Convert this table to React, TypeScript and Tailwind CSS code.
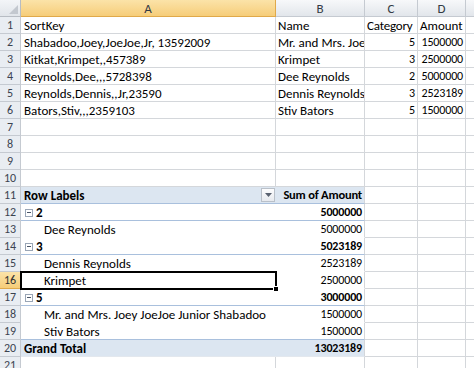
import React from 'react';

type Row = {
  n: number;
  a?: React.ReactNode;
  b?: React.ReactNode;
  c?: React.ReactNode;
  d?: React.ReactNode;
  pivot?: 'head' | 'group' | 'item' | 'total';
};

const font = { fontFamily: 'Carlito, Calibri, Lato, "Liberation Sans", sans-serif' };

function Collapse() {
  return (
    <span className="inline-flex items-center justify-center w-[8px] h-[8px] border border-[#9aa6b6] bg-white ml-[1px] mr-[3px] mt-[1px]">
      <span className="block w-[4px] h-px bg-[#4a5566]" />
    </span>
  );
}

function Dropdown() {
  return (
    <span className="absolute right-[1px] top-[1px] w-[14px] h-[14px] border border-[#b9c0c9] bg-gradient-to-b from-[#fdfdfe] to-[#e6e9ee] flex items-center justify-center">
      <svg width="7" height="4" viewBox="0 0 7 4">
        <path d="M0 0 L7 0 L3.5 4 Z" fill="#5a6270" />
      </svg>
    </span>
  );
}

// digits are narrower in the original font, so numbers get a slightly smaller size
function Num({ v }: { v: React.ReactNode }) {
  if (typeof v !== 'number') return <>{v}</>;
  return <span className="text-[12px] tracking-[-0.15px]">{v}</span>;
}

const rows: Row[] = [
  { n: 1, a: 'SortKey', b: 'Name', c: 'Category', d: 'Amount' },
  { n: 2, a: 'Shabadoo,Joey,JoeJoe,Jr, 13592009', b: 'Mr. and Mrs. Joey JoeJoe Junior Shabadoo', c: 5, d: 1500000 },
  { n: 3, a: 'Kitkat,Krimpet,,457389', b: 'Krimpet', c: 3, d: 2500000 },
  { n: 4, a: 'Reynolds,Dee,,,5728398', b: 'Dee Reynolds', c: 2, d: 5000000 },
  { n: 5, a: 'Reynolds,Dennis,,Jr,23590', b: 'Dennis Reynolds', c: 3, d: 2523189 },
  { n: 6, a: 'Bators,Stiv,,,2359103', b: 'Stiv Bators', c: 5, d: 1500000 },
  { n: 7 },
  { n: 8 },
  { n: 9 },
  { n: 10 },
  { n: 11, a: 'Row Labels', b: 'Sum of Amount', pivot: 'head' },
  { n: 12, a: '2', b: 5000000, pivot: 'group' },
  { n: 13, a: 'Dee Reynolds', b: 5000000, pivot: 'item' },
  { n: 14, a: '3', b: 5023189, pivot: 'group' },
  { n: 15, a: 'Dennis Reynolds', b: 2523189, pivot: 'item' },
  { n: 16, a: 'Krimpet', b: 2500000, pivot: 'item' },
  { n: 17, a: '5', b: 3000000, pivot: 'group' },
  { n: 18, a: 'Mr. and Mrs. Joey JoeJoe Junior Shabadoo', b: 1500000, pivot: 'item' },
  { n: 19, a: 'Stiv Bators', b: 1500000, pivot: 'item' },
  { n: 20, a: 'Grand Total', b: 13023189, pivot: 'total' },
  { n: 21 },
];

const isNum = (v: React.ReactNode) => typeof v === 'number';

export default function App() {
  const selectedRow = 16;

  return (
    <div className="w-[474px] h-[368px] overflow-hidden bg-white text-[13px] leading-none text-black" style={font}>
      {/* column headers */}
      <div className="flex h-[17px] text-[#333a44]">
        <div className="w-[21px] shrink-0 border-r border-b border-[#b7bcc3] bg-gradient-to-b from-[#f3f5f8] to-[#e1e5ea] relative">
          <svg className="absolute right-[2px] bottom-[2px]" width="9" height="9" viewBox="0 0 9 9">
            <path d="M9 0 L9 9 L0 9 Z" fill="#c3c8cf" />
          </svg>
        </div>
        <div className="w-[255px] shrink-0 border-r border-b border-[#e0a94a] bg-gradient-to-b from-[#fbe3a8] to-[#f6cd79] flex items-center justify-center">A</div>
        <div className="w-[89px] shrink-0 border-r border-b border-[#c5cad1] bg-gradient-to-b from-[#f7f8fa] to-[#e2e6eb] flex items-center justify-center">B</div>
        <div className="w-[53px] shrink-0 border-r border-b border-[#c5cad1] bg-gradient-to-b from-[#f7f8fa] to-[#e2e6eb] flex items-center justify-center">C</div>
        <div className="w-[48px] shrink-0 border-r border-b border-[#c5cad1] bg-gradient-to-b from-[#f7f8fa] to-[#e2e6eb] flex items-center justify-center">D</div>
        <div className="flex-1 border-b border-[#c5cad1] bg-gradient-to-b from-[#f7f8fa] to-[#e2e6eb]" />
      </div>

      {rows.map((r) => {
        const sel = r.n === selectedRow;
        const p = r.pivot;
        const band = p === 'head' || p === 'total';
        const bold = p === 'head' || p === 'group' || p === 'total';
        const pivotBorder =
          p === 'head' || p === 'group' ? 'border-b border-[#a9c0dd]' : p === 'total' ? 'border-b border-[#e3e8ee]' : 'border-b border-white';
        return (
          <div key={r.n} className="flex h-[17px]">
            <div
              className={
                'w-[21px] shrink-0 border-r border-b flex items-center justify-center text-[12px] ' +
                (sel
                  ? 'bg-gradient-to-b from-[#fbe3a8] to-[#f6cd79] border-[#e0a94a] text-[#333]'
                  : 'bg-[#e9edf2] border-[#c5cad1] text-[#3b4350]')
              }
            >
              {r.n}
            </div>
            {p ? (
              <>
                <div
                  className={
                    'w-[255px] shrink-0 relative flex items-center pl-[3px] whitespace-nowrap overflow-visible ' +
                    pivotBorder +
                    (band ? ' bg-[#dce6f1]' : '') +
                    (p === 'total' ? ' border-t border-t-[#a9c0dd] -mt-px h-[18px]' : '') +
                    (bold ? ' font-bold' : '')
                  }
                >
                  {p === 'group' && <Collapse />}
                  {p === 'item' ? <span className="pl-[20px]">{r.a}</span> : r.a}
                  {p === 'head' && <Dropdown />}
                  {sel && (
                    <div className="absolute -left-[1px] -top-[1px] w-[257px] h-[19px] border-2 border-black pointer-events-none">
                      <span className="absolute -right-[4px] -bottom-[4px] w-[6px] h-[6px] bg-black border border-white" />
                    </div>
                  )}
                </div>
                <div
                  className={
                    'w-[89px] shrink-0 flex items-center justify-end pr-[2px] whitespace-nowrap ' +
                    pivotBorder +
                    ' border-r border-r-[#d4d7db]' +
                    (band ? ' bg-[#dce6f1]' : '') +
                    (p === 'total' ? ' border-t border-t-[#a9c0dd] -mt-px h-[18px]' : '') +
                    (bold ? ' font-bold' : '')
                  }
                >
                  {p === 'head' ? <span className="text-[12.5px] tracking-[-0.2px]">{r.b}</span> : <Num v={r.b} />}
                </div>
              </>
            ) : (
              <>
                <div className="w-[255px] shrink-0 border-r border-b border-[#d4d7db] flex items-center pl-[3px] whitespace-nowrap overflow-hidden">
                  {r.a}
                </div>
                <div className="w-[89px] shrink-0 border-r border-b border-[#d4d7db] flex items-center pl-[2px] whitespace-nowrap overflow-hidden">
                  {r.b}
                </div>
              </>
            )}
            <div
              className={
                'w-[53px] shrink-0 border-r border-b border-[#d4d7db] flex items-center px-[2px] whitespace-nowrap overflow-hidden ' +
                (isNum(r.c) ? 'justify-end' : 'justify-start')
              }
            >
              {r.c === 'Category' ? <span className="tracking-[-0.2px]">{r.c}</span> : <Num v={r.c} />}
            </div>
            <div
              className={
                'w-[48px] shrink-0 border-r border-b border-[#d4d7db] flex items-center px-[2px] whitespace-nowrap overflow-hidden ' +
                (isNum(r.d) ? 'justify-end' : 'justify-start')
              }
            >
              <Num v={r.d} />
            </div>
            <div className="flex-1 border-b border-[#d4d7db]" />
          </div>
        );
      })}
    </div>
  );
}
